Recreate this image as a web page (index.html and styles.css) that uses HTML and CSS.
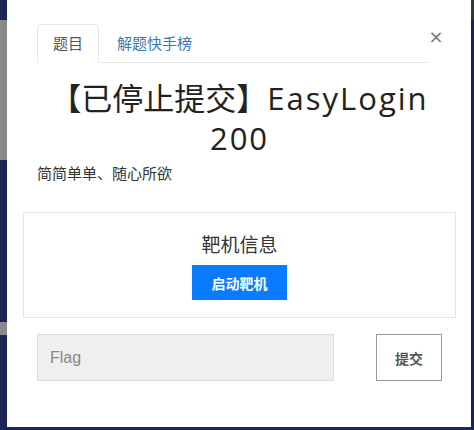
FILE: index.html
```html
<!DOCTYPE html>
<html>
<head>
  <meta charset="UTF-8">
  <title>EasyLogin</title>
  <link rel="stylesheet" href="styles.css">
</head>
<body>
  <div class="page">
    <div class="backdrop">
      <div class="bd-navy" style="height: 20px;"></div>
      <div class="bd-gray" style="height: 140px;"></div>
      <div class="bd-navy" style="height: 162px;"></div>
      <div class="bd-gray" style="height: 13px;"></div>
      <div class="bd-navy" style="flex: 1;"></div>
    </div>

    <div class="modal">
      <div class="modal-head">
        <ul class="tabs">
          <li class="tab active">题目</li>
          <li class="tab"><a href="#">解题快手榜</a></li>
        </ul>
        <button class="close" type="button">&times;</button>
      </div>

      <h3 class="challenge-title"><span class="cjk">【已停止提交】</span>EasyLogin<br>200</h3>
      <p class="challenge-desc">简简单单、随心所欲</p>

      <div class="target-box">
        <h4>靶机信息</h4>
        <button class="btn-start" type="button">启动靶机</button>
      </div>

      <form class="flag-form" onsubmit="return false;">
        <input type="text" class="flag-input" placeholder="Flag">
        <button class="btn-submit" type="submit">提交</button>
      </form>
    </div>

    <div class="edge"></div>
  </div>
</body>
</html>
```

FILE: styles.css
```css
body {
  margin: 0;
  background-color: #1e2657;
  font-family: "Noto Sans CJK SC", "Noto Sans", sans-serif;
  color: #333;
}
.page {
  display: flex;
  height: 430px;
}
.backdrop {
  width: 7px;
  display: flex;
  flex-direction: column;
}
.bd-navy {
  background-color: #1e2657;
}
.bd-gray {
  background-color: #8a8a8a;
}
.modal {
  width: 464px;
  height: 427px;
  background-color: #fff;
  padding: 0 15px 0 16px;
  box-sizing: border-box;
}
.edge {
  flex: 1;
  background-color: #1c2350;
  border-top: 20px solid #2c3a3a;
}
.modal-head {
  display: flex;
  align-items: flex-start;
  padding: 24px 0 0 14px;
}
.tabs {
  flex: 1;
  display: flex;
  list-style: none;
  margin: 0;
  padding: 0;
  border-bottom: 1px solid #e6e6e6;
}
.tab {
  padding: 8px 15px 9px;
  margin-right: 2px;
  margin-bottom: -1px;
  font-size: 15px;
  line-height: 20px;
  border: 1px solid transparent;
  border-radius: 4px 4px 0 0;
}
.tab.active {
  color: #555;
  border-color: #e6e6e6 #e6e6e6 #fff;
  background-color: #fff;
}
.tab a {
  color: #3a78b5;
  text-decoration: none;
}
.close {
  width: 28px;
  margin: 4px 6px 0 -6px;
  padding: 0;
  border: none;
  background: none;
  font-family: "DejaVu Sans", sans-serif;
  font-size: 18px;
  line-height: 18px;
  color: #777;
  cursor: pointer;
}
.challenge-title {
  margin: 15px 0 0;
  text-align: center;
  font-family: "Open Sans", "Noto Sans CJK SC", sans-serif;
  font-weight: 400;
  font-size: 31px;
  line-height: 40px;
  letter-spacing: 2px;
  color: #222;
}
.challenge-title .cjk {
  font-family: "Noto Sans CJK SC", sans-serif;
  line-height: 1;
  letter-spacing: 0;
}
.challenge-desc {
  margin: 4px 0 0 14px;
  font-size: 15px;
  line-height: 21px;
  color: #333;
}
.target-box {
  margin-top: 29px;
  height: 106px;
  box-sizing: border-box;
  border: 1px solid #e5e5e5;
  padding-top: 18px;
  text-align: center;
}
.target-box h4 {
  margin: 0;
  font-size: 19px;
  font-weight: normal;
  line-height: 26px;
  color: #333;
}
.btn-start {
  margin-top: 8px;
  width: 95px;
  height: 35px;
  border: none;
  background-color: #0a7bff;
  color: #fff;
  font-family: inherit;
  font-size: 14px;
  font-weight: bold;
}
.flag-form {
  display: flex;
  justify-content: space-between;
  margin: 16px 14px 0;
}
.flag-input {
  width: 297px;
  height: 47px;
  box-sizing: border-box;
  padding: 0 12px;
  border: 1px solid #dcdcdc;
  background-color: #efefef;
  font-family: "Liberation Sans", sans-serif;
  font-size: 16px;
  color: #555;
}
.flag-input::placeholder {
  color: #888;
}
.btn-submit {
  width: 66px;
  height: 47px;
  border: 1px solid #999;
  background-color: #fff;
  font-family: inherit;
  font-size: 14px;
  font-weight: bold;
  color: #555;
}
```
